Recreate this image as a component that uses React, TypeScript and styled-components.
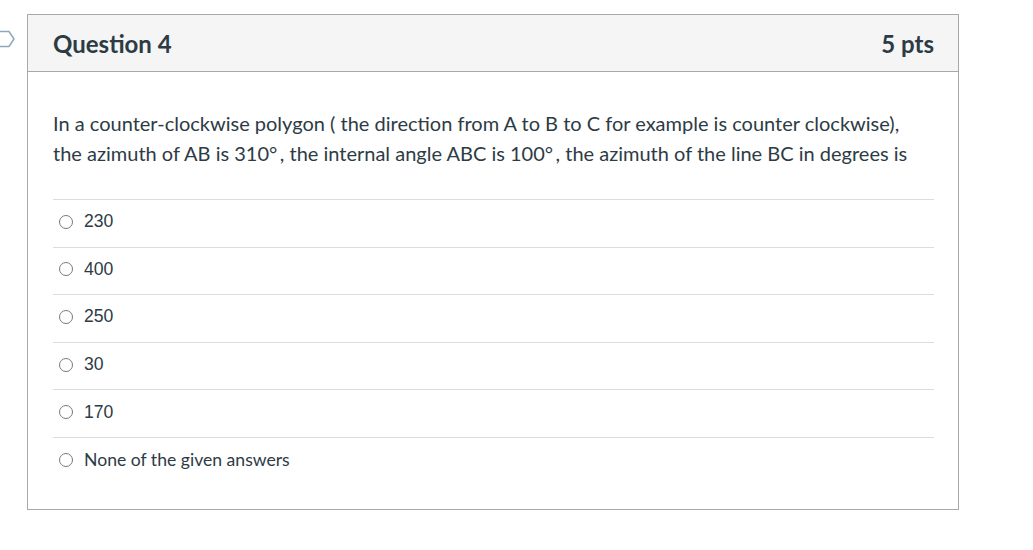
import styled, { createGlobalStyle } from 'styled-components';

const GlobalStyle = createGlobalStyle`
  body {
    margin: 0;
    background: #fff;
    font-family: Lato, "Liberation Sans", sans-serif;
    color: #2d3b45;
  }
`;

const answers = ['230', '400', '250', '30', '170', 'None of the given answers'];

export default function App() {
  return (
    <>
      <GlobalStyle />
      <Page>
        <Marker width="16" height="18" viewBox="0 0 16 18">
          <path d="M-2 1.5 H9 L14 9 L9 16.5 H-2" fill="none" stroke="#8ea6bc" strokeWidth="1.5" />
        </Marker>
        <Card>
          <Header>
            <Title>Question 4</Title>
            <Points>5 pts</Points>
          </Header>
          <Body>
            <QuestionText>
              {'In a counter-clockwise polygon ( the direction from A to B to C for example is counter clockwise), ' +
                'the azimuth of AB is 310\u00b0\u2009, the internal angle ABC is 100\u00b0\u2009, the azimuth of the ' +
                'line BC in degrees is'}
            </QuestionText>
            <Answers>
              {answers.map((a) => (
                <AnswerRow key={a}>
                  <Radio />
                  <AnswerLabel $numeric={/^\d+$/.test(a)}>{a}</AnswerLabel>
                </AnswerRow>
              ))}
            </Answers>
          </Body>
        </Card>
      </Page>
    </>
  );
}

const Page = styled.div`
  position: relative;
  padding: 14px 0 0 27px;
  width: 932px;
`;

// 左にはみ出ているブックマーク
const Marker = styled.svg`
  position: absolute;
  left: 0;
  top: 30px;
`;

const Card = styled.div`
  border: 1px solid #a8a8a8;
  background: #fff;
`;

const Header = styled.div`
  display: flex;
  align-items: center;
  justify-content: space-between;
  height: 56px;
  padding: 0 24px 0 25px;
  background: #f5f5f5;
  border-bottom: 1px solid #a8a8a8;
`;

const Title = styled.h2`
  margin: 0;
  font-size: 24px;
  font-weight: 700;
  color: #2d3b45;
`;

const Points = styled.div`
  font-size: 24px;
  font-weight: 700;
  color: #2d3b45;
`;

const Body = styled.div`
  padding: 36px 24px 24px 25px;
`;

const QuestionText = styled.p`
  margin: 0 0 31px;
  padding-right: 20px;
  font-size: 20px;
  line-height: 30px;
  color: #2d3b45;
`;

const Answers = styled.div`
  display: flex;
  flex-direction: column;
`;

const AnswerRow = styled.div`
  display: flex;
  align-items: center;
  box-sizing: border-box;
  height: 47.6px;
  border-top: 1px solid #dcdcdc;
  padding: 0 0 3px 6px;
`;

const Radio = styled.span`
  width: 12px;
  height: 12px;
  border: 1px solid #7a7a7a;
  border-radius: 50%;
  margin-right: 11px;
  flex: none;
`;

const AnswerLabel = styled.span<{ $numeric: boolean }>`
  font-family: ${(p) => (p.$numeric ? '"Liberation Sans", Arial, sans-serif' : 'Lato, sans-serif')};
  font-size: 17.6px;
  color: #2d3b45;
`;
